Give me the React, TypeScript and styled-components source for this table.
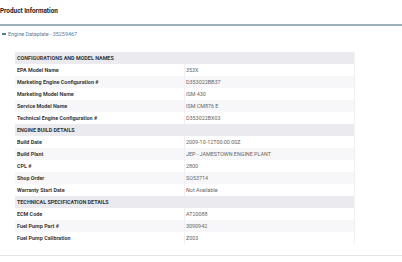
import React from 'react';
import styled, { createGlobalStyle } from 'styled-components';

const GlobalStyle = createGlobalStyle`
  html, body {
    margin: 0;
    padding: 0;
    background: #ffffff;
  }
  body {
    font-family: Roboto, "Liberation Sans", Arial, sans-serif;
    color: #333;
  }
`;

const Page = styled.div`
  width: 402px;
  height: 262px;
  overflow: hidden;
  display: flex;
  flex-direction: column;
`;

const Title = styled.div`
  height: 26px;
  display: flex;
  align-items: center;
  font-size: 6.4px;
  font-weight: 700;
  color: #222;
  line-height: 1;
  box-sizing: border-box;
  border-bottom: 2px solid #9cb2bb;
  padding-bottom: 2px;
`;

const Toggle = styled.div`
  display: flex;
  align-items: center;
  gap: 2px;
  height: 12px;
  margin-top: 2px;
  padding-left: 2px;
  font-size: 5.4px;
  color: #55809d;
`;

const Minus = styled.span`
  display: inline-block;
  width: 4px;
  height: 1.2px;
  background: #55809d;
`;

const Table = styled.div`
  margin: 12px 0 0 15px;
  width: 340px;
  display: flex;
  flex-direction: column;
  border-right: 1px solid #f1f1f3;
  box-sizing: border-box;
`;

const SectionHead = styled.div`
  height: 12px;
  display: flex;
  align-items: center;
  padding-left: 2px;
  background: #ebebef;
  font-size: 5.4px;
  font-weight: 700;
  color: #333;
  text-transform: uppercase;
`;

const Row = styled.div<{ $alt: boolean }>`
  height: 12px;
  display: grid;
  grid-template-columns: 170px 1fr;
  align-items: stretch;
  background: ${(p) => (p.$alt ? '#f7f7f9' : '#ffffff')};
  font-size: 5.4px;
`;

const Label = styled.div`
  display: flex;
  align-items: center;
  padding-left: 2px;
  font-weight: 700;
  color: #3a3a3a;
  border-right: 1px solid #f0f0f2;
`;

const Value = styled.div`
  display: flex;
  align-items: center;
  padding-left: 1px;
  color: #666;
`;

const Footer = styled.div`
  margin-top: 11px;
  border-top: 1px solid #e3e3e6;
`;

const sections: { title: string; rows: [string, string][] }[] = [
  {
    title: 'Configurations and Model Names',
    rows: [
      ['EPA Model Name', '353X'],
      ['Marketing Engine Configuration #', 'D353022BB37'],
      ['Marketing Model Name', 'ISM 430'],
      ['Service Model Name', 'ISM CM876 E'],
      ['Technical Engine Configuration #', 'D353022BX03'],
    ],
  },
  {
    title: 'Engine Build Details',
    rows: [
      ['Build Date', '2009-10-12T00:00:00Z'],
      ['Build Plant', 'JEP - JAMESTOWN ENGINE PLANT'],
      ['CPL #', '2800'],
      ['Shop Order', 'SO53714'],
      ['Warranty Start Date', 'Not Available'],
    ],
  },
  {
    title: 'Technical Specification Details',
    rows: [
      ['ECM Code', 'AT20088'],
      ['Fuel Pump Part #', '3090942'],
      ['Fuel Pump Calibration', 'Z003'],
    ],
  },
];

const App: React.FC = () => {
  return (
    <Page>
      <GlobalStyle />
      <Title>Product Information</Title>
      <Toggle>
        <Minus />
        Engine Dataplate - 35259467
      </Toggle>
      <Table>
        {sections.map((s) => (
          <React.Fragment key={s.title}>
            <SectionHead>{s.title}</SectionHead>
            {s.rows.map(([label, value], i) => (
              <Row key={label} $alt={i % 2 === 1}>
                <Label>{label}</Label>
                <Value>{value}</Value>
              </Row>
            ))}
          </React.Fragment>
        ))}
      </Table>
      <Footer />
    </Page>
  );
};

export default App;
